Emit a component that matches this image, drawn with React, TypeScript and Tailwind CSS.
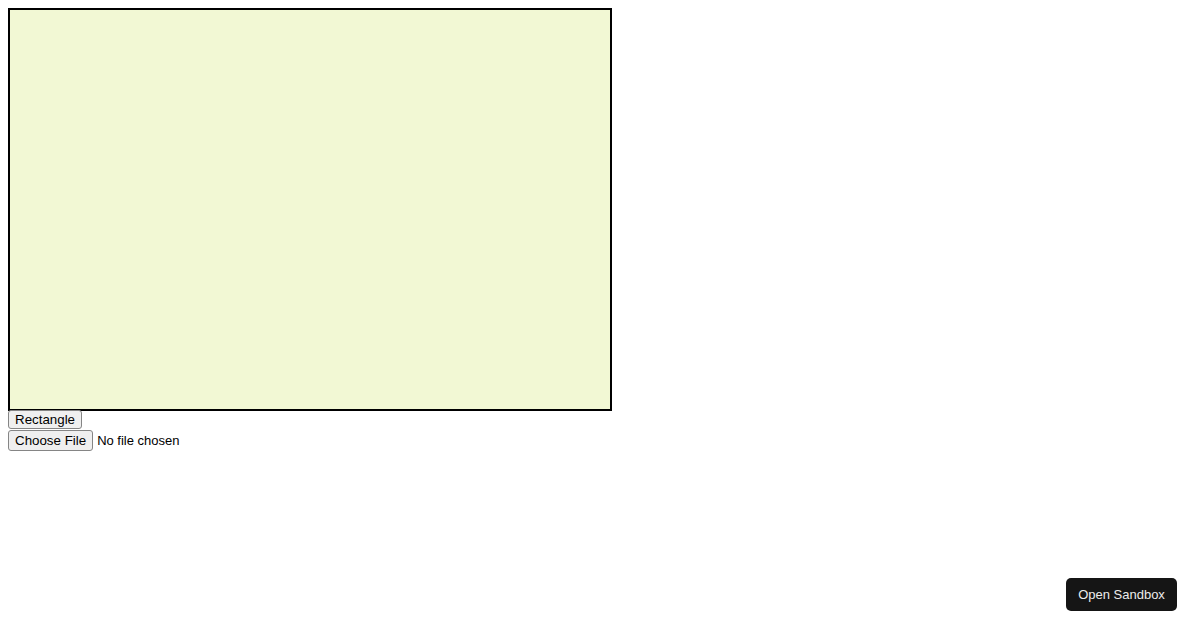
import React from 'react'

const controlFont = "font-['Liberation_Sans',Arial,sans-serif] text-[13.33px] leading-[15px]"

export default function App() {
    return (
        <div className="relative min-h-[630px] w-full bg-white p-2 text-black">
            {/* canvas area */}
            <div className="w-[604px] h-[403px] border-2 border-black bg-[#f2f8d4]" />

            <div className="flex flex-col items-start">
                <button
                    className={`${controlFont} -mt-px bg-[#efefef] border border-[#858585] rounded-[3px] px-[6px] py-[1px] text-black`}
                >
                    Rectangle
                </button>
                <input
                    type="file"
                    className="mt-px font-['Liberation_Sans',Arial,sans-serif] text-[13px] leading-[15px] text-black file:font-['Liberation_Sans',Arial,sans-serif] file:text-[13.33px] file:leading-[15px] file:bg-[#efefef] file:border file:border-solid file:border-[#858585] file:rounded-[3px] file:px-[6px] file:py-[2px] file:mr-[4px] file:text-black"
                />
            </div>

            {/* sandbox button */}
            <button className="fixed right-[23px] bottom-[19px] w-[111px] h-[33px] rounded-[5px] bg-[#151515] text-[#ececec] font-['Liberation_Sans',Arial,sans-serif] text-[13px]">
                Open Sandbox
            </button>
        </div>
    )
}
